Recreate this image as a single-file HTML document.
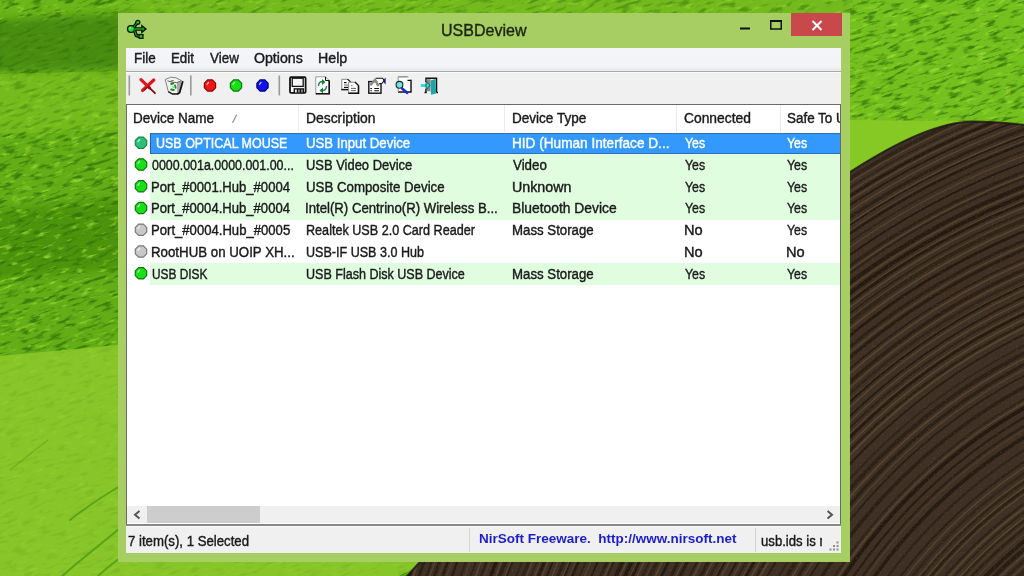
<!DOCTYPE html>
<html><head><meta charset="utf-8"><style>
*{margin:0;padding:0;box-sizing:border-box}
html,body{width:1024px;height:576px;overflow:hidden}
body{position:relative;font-family:"Liberation Sans",sans-serif;background:#5fa815}
svg{position:absolute;left:0;top:0}
.b{position:absolute}
.t{position:absolute;white-space:pre;font-size:14px;line-height:22px;height:22px;color:#1a1a1a;transform-origin:0 0;-webkit-text-stroke:.4px currentColor}
.tw{color:#eef7ff}
</style></head><body>
<svg width="1024" height="576" viewBox="0 0 1024 576">
  <defs>
    <clipPath id="hill"><path d="M200,800 L420,562 C600,370 780,215 850,172 C900,140 940,122 973,121.5 C1000,121.5 1030,125 1100,135 L1100,800 Z"/></clipPath>
    <filter id="gdark" x="-50%" y="-50%" width="200%" height="200%" color-interpolation-filters="sRGB">
      <feTurbulence type="fractalNoise" baseFrequency="0.07 0.3" numOctaves="3" seed="11"/>
      <feColorMatrix type="matrix" values="0 0 0 0 0.20  0 0 0 0 0.45  0 0 0 0 0.03  0 0 0 -4.5 2.2"/>
    </filter>
    <filter id="glight" x="-50%" y="-50%" width="200%" height="200%" color-interpolation-filters="sRGB">
      <feTurbulence type="fractalNoise" baseFrequency="0.08 0.3" numOctaves="3" seed="4"/>
      <feColorMatrix type="matrix" values="0 0 0 0 0.62  0 0 0 0 0.86  0 0 0 0 0.2  0 0 0 4.0 -2.3"/>
    </filter>
    <filter id="soft" x="-20%" y="-20%" width="140%" height="140%"><feGaussianBlur stdDeviation="5"/></filter>
    <filter id="bnoise" x="0" y="0" width="100%" height="100%" color-interpolation-filters="sRGB">
      <feTurbulence type="fractalNoise" baseFrequency="0.5" numOctaves="1" seed="2"/>
      <feColorMatrix type="matrix" values="0 0 0 0 0.40  0 0 0 0 0.31  0 0 0 0 0.21  0 0 0 1.4 -0.8"/>
    </filter>
  </defs>
  <rect x="0" y="0" width="1024" height="576" fill="#6cb41a"/>
  <polygon points="0,0 1024,0 1024,12 0,22" fill="#6cb61a"/>
  <polygon points="850,0 1024,0 1024,122 850,120" fill="#74c01e"/>
  <g filter="url(#soft)"><polygon points="-20,135 140,130 140,350 -20,360" fill="#64ad16"/>
  <polygon points="-20,212 140,196 140,268 -20,282" fill="#4e9410"/></g>
  <g transform="rotate(-18 512 288)"><rect x="-300" y="-300" width="1600" height="1200" filter="url(#gdark)" opacity=".8"/></g>
  <g transform="rotate(-18 512 288)"><rect x="-300" y="-300" width="1600" height="1200" filter="url(#glight)" opacity=".8"/></g>
  <g filter="url(#soft)" opacity=".7"><polygon points="-20,21 140,12 140,70 -20,72" fill="#3a7c0c"/></g>
  <polygon points="0,74 118,71 118,130 0,133" fill="#80c422" opacity=".45"/>
  <rect x="118" y="0" width="732" height="14" fill="#82c624" opacity=".35"/>
  <polygon points="0,356 118,345 430,560 398,576 0,576" fill="#8ecb2c" opacity=".8"/>
  <g stroke="#3e8a10" stroke-opacity=".6" fill="none" stroke-linecap="round">
    <path d="M60,578 C80,560 100,545 120,528" stroke-width="2.2"/>
    <path d="M70,520 C85,508 100,498 120,486" stroke-width="1.8"/>
    <path d="M96,578 C104,570 112,564 120,558" stroke-width="2"/>
    <path d="M10,470 C25,458 35,450 48,440" stroke-width="1.2" stroke-opacity=".35"/>
  </g>
  <polygon points="850,120 975,121 850,172" fill="#86c824"/>
  <path d="M200,800 L420,562 C600,370 780,215 850,172 C900,140 940,122 973,121.5 C1000,121.5 1030,125 1100,135 L1100,800 Z" fill="#3e3024"/>
  <g clip-path="url(#hill)"><circle cx="1291" cy="875" r="250.0" fill="none" stroke="#1f160d" stroke-width="2.38" stroke-opacity="0.43"/><circle cx="1291" cy="875" r="256.4" fill="none" stroke="#1f160d" stroke-width="2.89" stroke-opacity="0.53"/><circle cx="1291" cy="875" r="252.3" fill="none" stroke="#75603f" stroke-width="0.84" stroke-opacity="0.45"/><circle cx="1291" cy="875" r="264.5" fill="none" stroke="#1f160d" stroke-width="1.77" stroke-opacity="0.40"/><circle cx="1291" cy="875" r="259.9" fill="none" stroke="#75603f" stroke-width="0.92" stroke-opacity="0.45"/><circle cx="1291" cy="875" r="271.6" fill="none" stroke="#1f160d" stroke-width="3.11" stroke-opacity="0.82"/><circle cx="1291" cy="875" r="267.9" fill="none" stroke="#75603f" stroke-width="1.78" stroke-opacity="0.45"/><circle cx="1291" cy="875" r="277.9" fill="none" stroke="#1f160d" stroke-width="3.66" stroke-opacity="0.49"/><circle cx="1291" cy="875" r="274.6" fill="none" stroke="#75603f" stroke-width="1.11" stroke-opacity="0.45"/><circle cx="1291" cy="875" r="288.0" fill="none" stroke="#1f160d" stroke-width="2.03" stroke-opacity="0.64"/><circle cx="1291" cy="875" r="284.2" fill="none" stroke="#75603f" stroke-width="1.35" stroke-opacity="0.45"/><circle cx="1291" cy="875" r="294.3" fill="none" stroke="#1f160d" stroke-width="1.74" stroke-opacity="0.45"/><circle cx="1291" cy="875" r="302.4" fill="none" stroke="#1f160d" stroke-width="2.35" stroke-opacity="0.64"/><circle cx="1291" cy="875" r="298.8" fill="none" stroke="#75603f" stroke-width="1.59" stroke-opacity="0.45"/><circle cx="1291" cy="875" r="311.9" fill="none" stroke="#1f160d" stroke-width="2.19" stroke-opacity="0.64"/><circle cx="1291" cy="875" r="307.2" fill="none" stroke="#75603f" stroke-width="1.53" stroke-opacity="0.45"/><circle cx="1291" cy="875" r="319.3" fill="none" stroke="#1f160d" stroke-width="3.95" stroke-opacity="0.41"/><circle cx="1291" cy="875" r="314.8" fill="none" stroke="#75603f" stroke-width="0.95" stroke-opacity="0.45"/><circle cx="1291" cy="875" r="327.8" fill="none" stroke="#1f160d" stroke-width="1.69" stroke-opacity="0.68"/><circle cx="1291" cy="875" r="336.7" fill="none" stroke="#1f160d" stroke-width="3.70" stroke-opacity="0.51"/><circle cx="1291" cy="875" r="345.6" fill="none" stroke="#1f160d" stroke-width="2.99" stroke-opacity="0.58"/><circle cx="1291" cy="875" r="356.4" fill="none" stroke="#1f160d" stroke-width="2.74" stroke-opacity="0.68"/><circle cx="1291" cy="875" r="351.9" fill="none" stroke="#75603f" stroke-width="1.45" stroke-opacity="0.45"/><circle cx="1291" cy="875" r="367.3" fill="none" stroke="#1f160d" stroke-width="3.57" stroke-opacity="0.49"/><circle cx="1291" cy="875" r="363.0" fill="none" stroke="#75603f" stroke-width="0.82" stroke-opacity="0.45"/><circle cx="1291" cy="875" r="375.6" fill="none" stroke="#1f160d" stroke-width="2.00" stroke-opacity="0.41"/><circle cx="1291" cy="875" r="371.1" fill="none" stroke="#75603f" stroke-width="0.93" stroke-opacity="0.45"/><circle cx="1291" cy="875" r="382.9" fill="none" stroke="#1f160d" stroke-width="2.54" stroke-opacity="0.79"/><circle cx="1291" cy="875" r="379.0" fill="none" stroke="#75603f" stroke-width="1.35" stroke-opacity="0.45"/><circle cx="1291" cy="875" r="393.3" fill="none" stroke="#1f160d" stroke-width="3.57" stroke-opacity="0.78"/><circle cx="1291" cy="875" r="389.5" fill="none" stroke="#75603f" stroke-width="1.16" stroke-opacity="0.45"/><circle cx="1291" cy="875" r="403.7" fill="none" stroke="#1f160d" stroke-width="3.90" stroke-opacity="0.43"/><circle cx="1291" cy="875" r="400.2" fill="none" stroke="#75603f" stroke-width="1.03" stroke-opacity="0.45"/><circle cx="1291" cy="875" r="412.1" fill="none" stroke="#1f160d" stroke-width="3.01" stroke-opacity="0.48"/><circle cx="1291" cy="875" r="408.3" fill="none" stroke="#75603f" stroke-width="1.17" stroke-opacity="0.45"/><circle cx="1291" cy="875" r="421.0" fill="none" stroke="#1f160d" stroke-width="3.89" stroke-opacity="0.70"/><circle cx="1291" cy="875" r="416.7" fill="none" stroke="#75603f" stroke-width="1.48" stroke-opacity="0.45"/><circle cx="1291" cy="875" r="427.2" fill="none" stroke="#1f160d" stroke-width="3.76" stroke-opacity="0.74"/><circle cx="1291" cy="875" r="437.2" fill="none" stroke="#1f160d" stroke-width="2.54" stroke-opacity="0.55"/><circle cx="1291" cy="875" r="432.9" fill="none" stroke="#75603f" stroke-width="0.86" stroke-opacity="0.45"/><circle cx="1291" cy="875" r="443.6" fill="none" stroke="#1f160d" stroke-width="2.10" stroke-opacity="0.43"/><circle cx="1291" cy="875" r="440.4" fill="none" stroke="#75603f" stroke-width="0.80" stroke-opacity="0.45"/><circle cx="1291" cy="875" r="450.3" fill="none" stroke="#1f160d" stroke-width="1.84" stroke-opacity="0.53"/><circle cx="1291" cy="875" r="445.6" fill="none" stroke="#75603f" stroke-width="1.41" stroke-opacity="0.45"/><circle cx="1291" cy="875" r="457.1" fill="none" stroke="#1f160d" stroke-width="2.21" stroke-opacity="0.52"/><circle cx="1291" cy="875" r="453.8" fill="none" stroke="#75603f" stroke-width="1.65" stroke-opacity="0.45"/><circle cx="1291" cy="875" r="468.0" fill="none" stroke="#1f160d" stroke-width="2.72" stroke-opacity="0.59"/><circle cx="1291" cy="875" r="464.8" fill="none" stroke="#75603f" stroke-width="1.14" stroke-opacity="0.45"/><circle cx="1291" cy="875" r="475.3" fill="none" stroke="#1f160d" stroke-width="3.59" stroke-opacity="0.43"/><circle cx="1291" cy="875" r="470.4" fill="none" stroke="#75603f" stroke-width="1.33" stroke-opacity="0.45"/><circle cx="1291" cy="875" r="482.1" fill="none" stroke="#1f160d" stroke-width="2.90" stroke-opacity="0.36"/><circle cx="1291" cy="875" r="477.1" fill="none" stroke="#75603f" stroke-width="1.66" stroke-opacity="0.45"/><circle cx="1291" cy="875" r="491.6" fill="none" stroke="#1f160d" stroke-width="2.23" stroke-opacity="0.53"/><circle cx="1291" cy="875" r="487.0" fill="none" stroke="#75603f" stroke-width="1.33" stroke-opacity="0.45"/><circle cx="1291" cy="875" r="501.5" fill="none" stroke="#1f160d" stroke-width="2.39" stroke-opacity="0.46"/><circle cx="1291" cy="875" r="512.4" fill="none" stroke="#1f160d" stroke-width="3.65" stroke-opacity="0.75"/><circle cx="1291" cy="875" r="522.1" fill="none" stroke="#1f160d" stroke-width="2.14" stroke-opacity="0.61"/><circle cx="1291" cy="875" r="519.0" fill="none" stroke="#75603f" stroke-width="0.83" stroke-opacity="0.45"/><circle cx="1291" cy="875" r="529.5" fill="none" stroke="#1f160d" stroke-width="2.22" stroke-opacity="0.70"/><circle cx="1291" cy="875" r="537.7" fill="none" stroke="#1f160d" stroke-width="3.85" stroke-opacity="0.84"/><circle cx="1291" cy="875" r="545.5" fill="none" stroke="#1f160d" stroke-width="2.13" stroke-opacity="0.46"/><circle cx="1291" cy="875" r="542.1" fill="none" stroke="#75603f" stroke-width="1.42" stroke-opacity="0.45"/><circle cx="1291" cy="875" r="556.0" fill="none" stroke="#1f160d" stroke-width="3.62" stroke-opacity="0.59"/><circle cx="1291" cy="875" r="566.0" fill="none" stroke="#1f160d" stroke-width="1.80" stroke-opacity="0.68"/><circle cx="1291" cy="875" r="575.9" fill="none" stroke="#1f160d" stroke-width="3.40" stroke-opacity="0.59"/><circle cx="1291" cy="875" r="571.4" fill="none" stroke="#75603f" stroke-width="1.13" stroke-opacity="0.45"/><circle cx="1291" cy="875" r="585.9" fill="none" stroke="#1f160d" stroke-width="3.93" stroke-opacity="0.55"/><circle cx="1291" cy="875" r="581.1" fill="none" stroke="#75603f" stroke-width="1.52" stroke-opacity="0.45"/><circle cx="1291" cy="875" r="592.8" fill="none" stroke="#1f160d" stroke-width="1.90" stroke-opacity="0.43"/><circle cx="1291" cy="875" r="602.8" fill="none" stroke="#1f160d" stroke-width="1.95" stroke-opacity="0.76"/><circle cx="1291" cy="875" r="612.1" fill="none" stroke="#1f160d" stroke-width="2.44" stroke-opacity="0.62"/><circle cx="1291" cy="875" r="609.1" fill="none" stroke="#75603f" stroke-width="1.77" stroke-opacity="0.45"/><circle cx="1291" cy="875" r="621.4" fill="none" stroke="#1f160d" stroke-width="2.86" stroke-opacity="0.82"/><circle cx="1291" cy="875" r="616.6" fill="none" stroke="#75603f" stroke-width="1.63" stroke-opacity="0.45"/><circle cx="1291" cy="875" r="628.4" fill="none" stroke="#1f160d" stroke-width="2.20" stroke-opacity="0.50"/><circle cx="1291" cy="875" r="624.2" fill="none" stroke="#75603f" stroke-width="1.06" stroke-opacity="0.45"/><circle cx="1291" cy="875" r="636.5" fill="none" stroke="#1f160d" stroke-width="1.91" stroke-opacity="0.81"/><circle cx="1291" cy="875" r="632.6" fill="none" stroke="#75603f" stroke-width="1.38" stroke-opacity="0.45"/><circle cx="1291" cy="875" r="647.0" fill="none" stroke="#1f160d" stroke-width="2.61" stroke-opacity="0.81"/><circle cx="1291" cy="875" r="643.0" fill="none" stroke="#75603f" stroke-width="1.32" stroke-opacity="0.45"/><circle cx="1291" cy="875" r="653.1" fill="none" stroke="#1f160d" stroke-width="2.66" stroke-opacity="0.44"/><circle cx="1291" cy="875" r="648.5" fill="none" stroke="#75603f" stroke-width="0.97" stroke-opacity="0.45"/><circle cx="1291" cy="875" r="661.5" fill="none" stroke="#1f160d" stroke-width="3.34" stroke-opacity="0.63"/><circle cx="1291" cy="875" r="657.5" fill="none" stroke="#75603f" stroke-width="1.36" stroke-opacity="0.45"/><circle cx="1291" cy="875" r="671.4" fill="none" stroke="#1f160d" stroke-width="1.85" stroke-opacity="0.63"/><circle cx="1291" cy="875" r="667.9" fill="none" stroke="#75603f" stroke-width="1.57" stroke-opacity="0.45"/><circle cx="1291" cy="875" r="680.0" fill="none" stroke="#1f160d" stroke-width="2.95" stroke-opacity="0.73"/><circle cx="1291" cy="875" r="688.2" fill="none" stroke="#1f160d" stroke-width="3.07" stroke-opacity="0.60"/><circle cx="1291" cy="875" r="683.8" fill="none" stroke="#75603f" stroke-width="1.25" stroke-opacity="0.45"/><circle cx="1291" cy="875" r="696.8" fill="none" stroke="#1f160d" stroke-width="2.75" stroke-opacity="0.82"/><circle cx="1291" cy="875" r="707.2" fill="none" stroke="#1f160d" stroke-width="3.86" stroke-opacity="0.48"/><circle cx="1291" cy="875" r="702.3" fill="none" stroke="#75603f" stroke-width="1.64" stroke-opacity="0.45"/><circle cx="1291" cy="875" r="713.9" fill="none" stroke="#1f160d" stroke-width="1.89" stroke-opacity="0.57"/><circle cx="1291" cy="875" r="710.4" fill="none" stroke="#75603f" stroke-width="0.87" stroke-opacity="0.45"/><circle cx="1291" cy="875" r="723.3" fill="none" stroke="#1f160d" stroke-width="3.48" stroke-opacity="0.80"/><circle cx="1291" cy="875" r="718.8" fill="none" stroke="#75603f" stroke-width="1.46" stroke-opacity="0.45"/><circle cx="1291" cy="875" r="730.0" fill="none" stroke="#1f160d" stroke-width="3.72" stroke-opacity="0.83"/><circle cx="1291" cy="875" r="725.1" fill="none" stroke="#75603f" stroke-width="1.20" stroke-opacity="0.45"/><circle cx="1291" cy="875" r="738.4" fill="none" stroke="#1f160d" stroke-width="3.98" stroke-opacity="0.77"/><circle cx="1291" cy="875" r="734.5" fill="none" stroke="#75603f" stroke-width="1.32" stroke-opacity="0.45"/><circle cx="1291" cy="875" r="746.1" fill="none" stroke="#1f160d" stroke-width="2.07" stroke-opacity="0.51"/><circle cx="1291" cy="875" r="752.2" fill="none" stroke="#1f160d" stroke-width="2.93" stroke-opacity="0.57"/><circle cx="1291" cy="875" r="748.5" fill="none" stroke="#75603f" stroke-width="1.42" stroke-opacity="0.45"/><circle cx="1291" cy="875" r="760.8" fill="none" stroke="#1f160d" stroke-width="1.75" stroke-opacity="0.84"/><circle cx="1291" cy="875" r="771.6" fill="none" stroke="#1f160d" stroke-width="1.85" stroke-opacity="0.48"/><circle cx="1291" cy="875" r="767.1" fill="none" stroke="#75603f" stroke-width="1.07" stroke-opacity="0.45"/><circle cx="1291" cy="875" r="778.3" fill="none" stroke="#1f160d" stroke-width="2.61" stroke-opacity="0.81"/><circle cx="1291" cy="875" r="785.6" fill="none" stroke="#1f160d" stroke-width="1.96" stroke-opacity="0.81"/><circle cx="1291" cy="875" r="781.2" fill="none" stroke="#75603f" stroke-width="0.89" stroke-opacity="0.45"/><circle cx="1291" cy="875" r="791.8" fill="none" stroke="#1f160d" stroke-width="3.25" stroke-opacity="0.56"/><circle cx="1291" cy="875" r="787.0" fill="none" stroke="#75603f" stroke-width="1.43" stroke-opacity="0.45"/><circle cx="1291" cy="875" r="801.9" fill="none" stroke="#1f160d" stroke-width="1.80" stroke-opacity="0.78"/><circle cx="1291" cy="875" r="797.1" fill="none" stroke="#75603f" stroke-width="1.25" stroke-opacity="0.45"/><circle cx="1291" cy="875" r="809.6" fill="none" stroke="#1f160d" stroke-width="2.93" stroke-opacity="0.81"/><circle cx="1291" cy="875" r="806.3" fill="none" stroke="#75603f" stroke-width="1.33" stroke-opacity="0.45"/><circle cx="1291" cy="875" r="816.7" fill="none" stroke="#1f160d" stroke-width="1.86" stroke-opacity="0.43"/><circle cx="1291" cy="875" r="813.3" fill="none" stroke="#75603f" stroke-width="1.11" stroke-opacity="0.45"/><circle cx="1291" cy="875" r="824.3" fill="none" stroke="#1f160d" stroke-width="3.42" stroke-opacity="0.49"/><circle cx="1291" cy="875" r="820.9" fill="none" stroke="#75603f" stroke-width="1.15" stroke-opacity="0.45"/><circle cx="1291" cy="875" r="830.4" fill="none" stroke="#1f160d" stroke-width="2.20" stroke-opacity="0.36"/><circle cx="1291" cy="875" r="839.1" fill="none" stroke="#1f160d" stroke-width="2.05" stroke-opacity="0.59"/><circle cx="1291" cy="875" r="845.6" fill="none" stroke="#1f160d" stroke-width="3.57" stroke-opacity="0.57"/><circle cx="1291" cy="875" r="841.0" fill="none" stroke="#75603f" stroke-width="1.19" stroke-opacity="0.45"/><circle cx="1291" cy="875" r="854.2" fill="none" stroke="#1f160d" stroke-width="3.25" stroke-opacity="0.84"/><circle cx="1291" cy="875" r="849.5" fill="none" stroke="#75603f" stroke-width="1.51" stroke-opacity="0.45"/><circle cx="1291" cy="875" r="863.4" fill="none" stroke="#1f160d" stroke-width="2.57" stroke-opacity="0.52"/><circle cx="1291" cy="875" r="860.1" fill="none" stroke="#75603f" stroke-width="0.87" stroke-opacity="0.45"/><circle cx="1291" cy="875" r="873.1" fill="none" stroke="#1f160d" stroke-width="2.21" stroke-opacity="0.43"/><circle cx="1291" cy="875" r="868.4" fill="none" stroke="#75603f" stroke-width="1.67" stroke-opacity="0.45"/><circle cx="1291" cy="875" r="882.4" fill="none" stroke="#1f160d" stroke-width="2.28" stroke-opacity="0.47"/><circle cx="1291" cy="875" r="878.5" fill="none" stroke="#75603f" stroke-width="0.96" stroke-opacity="0.45"/><circle cx="1291" cy="875" r="890.6" fill="none" stroke="#1f160d" stroke-width="2.23" stroke-opacity="0.83"/><circle cx="1291" cy="875" r="899.4" fill="none" stroke="#1f160d" stroke-width="2.19" stroke-opacity="0.83"/><circle cx="1291" cy="875" r="895.7" fill="none" stroke="#75603f" stroke-width="0.80" stroke-opacity="0.45"/><circle cx="1291" cy="875" r="907.3" fill="none" stroke="#1f160d" stroke-width="2.74" stroke-opacity="0.60"/><circle cx="1291" cy="875" r="903.3" fill="none" stroke="#75603f" stroke-width="0.80" stroke-opacity="0.45"/><circle cx="1291" cy="875" r="914.6" fill="none" stroke="#1f160d" stroke-width="1.82" stroke-opacity="0.55"/><circle cx="1291" cy="875" r="911.6" fill="none" stroke="#75603f" stroke-width="1.10" stroke-opacity="0.45"/><circle cx="1291" cy="875" r="921.8" fill="none" stroke="#1f160d" stroke-width="3.01" stroke-opacity="0.61"/><circle cx="1291" cy="875" r="931.1" fill="none" stroke="#1f160d" stroke-width="3.32" stroke-opacity="0.79"/><circle cx="1291" cy="875" r="927.4" fill="none" stroke="#75603f" stroke-width="1.78" stroke-opacity="0.45"/><circle cx="1291" cy="875" r="937.8" fill="none" stroke="#1f160d" stroke-width="3.34" stroke-opacity="0.67"/><circle cx="1291" cy="875" r="933.1" fill="none" stroke="#75603f" stroke-width="1.69" stroke-opacity="0.45"/><circle cx="1291" cy="875" r="946.9" fill="none" stroke="#1f160d" stroke-width="3.36" stroke-opacity="0.76"/><circle cx="1291" cy="875" r="942.9" fill="none" stroke="#75603f" stroke-width="1.30" stroke-opacity="0.45"/><circle cx="1291" cy="875" r="957.1" fill="none" stroke="#1f160d" stroke-width="3.53" stroke-opacity="0.76"/><circle cx="1291" cy="875" r="952.3" fill="none" stroke="#75603f" stroke-width="1.48" stroke-opacity="0.45"/><rect x="380" y="100" width="700" height="500" filter="url(#bnoise)"/></g>
  <path d="M200,800 L420,562 C600,370 780,215 850,172 C900,140 940,122 973,121.5 C1000,121.5 1030,125 1100,135" fill="none" stroke="#1e1810" stroke-width="2" stroke-opacity=".8"/>
</svg>
<div class="b" style="left:118px;top:13px;width:732px;height:549px;background:#a6ce62"></div>
<div class="b" style="left:791px;top:13px;width:51px;height:23px;background:#c9484c"></div>
<div class="b" style="left:126px;top:48px;width:715px;height:505px;background:#f0f0f0"></div>
<div class="b" style="left:126px;top:48px;width:715px;height:23px;background:linear-gradient(#f4f5f8 0,#f3f4f7 80%,#e6e6e8 100%)"></div>
<div class="b" style="left:126px;top:71px;width:715px;height:1px;background:#a9a9a9"></div>
<div class="b" style="left:126px;top:72px;width:715px;height:1px;background:#fcfcfc"></div>
<div class="b" style="left:126px;top:104px;width:715px;height:421px;background:#fff;border:1px solid #6a6a6a;border-bottom:none"></div>
<div class="b" style="left:126px;top:524px;width:715px;height:2px;background:#888"></div>
<div class="b" style="left:126px;top:526px;width:715px;height:1px;background:#fbfbfb"></div>
<div class="b" style="left:298px;top:105px;width:1px;height:27px;background:#ececec"></div>
<div class="b" style="left:504px;top:105px;width:1px;height:27px;background:#ececec"></div>
<div class="b" style="left:676px;top:105px;width:1px;height:27px;background:#ececec"></div>
<div class="b" style="left:780px;top:105px;width:1px;height:27px;background:#ececec"></div>
<div class="b" style="left:150px;top:133px;width:690px;height:20.75px;background:#3399ff;border-top:1px solid #2f6fb8;border-bottom:1px solid #2f6fb8;border-left:1px solid #2a5f9a"></div>
<div class="b" style="left:150px;top:154px;width:690px;height:22px;background:#e0fde0"></div>
<div class="b" style="left:150px;top:176px;width:690px;height:22px;background:#e0fde0"></div>
<div class="b" style="left:150px;top:198px;width:690px;height:22px;background:#e0fde0"></div>
<div class="b" style="left:150px;top:263px;width:690px;height:22px;background:#e0fde0"></div>
<div class="b" style="left:127px;top:506px;width:713px;height:18px;background:#f0f0f0;border-bottom:1px solid #fff"></div>
<div class="b" style="left:147px;top:506px;width:113px;height:17px;background:#cdcdcd"></div>
<div class="b" style="left:126px;top:527px;width:715px;height:26px;background:#f0f0f0"></div>
<div class="b" style="left:469px;top:528px;width:1px;height:24px;background:#d5d5d5"></div>
<div class="b" style="left:755px;top:528px;width:1px;height:24px;background:#d5d5d5"></div>
<div class="t" style="left:440.77px;top:20.00px;font-size:17px;font-weight:400;color:#1e2612;transform:scaleX(0.9430)">USBDeview</div>
<div class="t" style="left:133.69px;top:47.00px;font-size:14px;font-weight:400;color:#1a1a1a;transform:scaleX(0.9615)">File</div>
<div class="t" style="left:170.71px;top:47.00px;font-size:14px;font-weight:400;color:#1a1a1a;transform:scaleX(0.9498)">Edit</div>
<div class="t" style="left:209.65px;top:47.00px;font-size:14px;font-weight:400;color:#1a1a1a;transform:scaleX(0.9583)">View</div>
<div class="t" style="left:254.04px;top:47.00px;font-size:14px;font-weight:400;color:#1a1a1a;transform:scaleX(1.0106)">Options</div>
<div class="t" style="left:317.88px;top:47.00px;font-size:14px;font-weight:400;color:#1a1a1a;transform:scaleX(1.0148)">Help</div>
<div class="t" style="left:133.44px;top:107.30px;font-size:14px;font-weight:400;color:#1a1a1a;transform:scaleX(0.9648)">Device Name</div>
<div class="t" style="left:305.71px;top:107.30px;font-size:14px;font-weight:400;color:#1a1a1a;transform:scaleX(0.9912)">Description</div>
<div class="t" style="left:512.04px;top:107.30px;font-size:14px;font-weight:400;color:#1a1a1a;transform:scaleX(0.9667)">Device Type</div>
<div class="t" style="left:684.01px;top:107.30px;font-size:14px;font-weight:400;color:#1a1a1a;transform:scaleX(0.9879)">Connected</div>
<div class="b" style="left:0;top:0;width:840px;height:576px;overflow:hidden"><div class="t" style="left:786.93px;top:107.30px;font-size:14px;font-weight:400;color:#1a1a1a;transform:scaleX(0.9586)">Safe To U</div></div>
<div class="t" style="left:127.94px;top:530.30px;font-size:14px;font-weight:400;color:#1a1a1a;transform:scaleX(0.9424)">7 item(s), 1 Selected</div>
<div class="t" style="left:478.60px;top:528.20px;font-size:12px;font-weight:700;color:#1c1cd0;transform:scaleX(1.1246);-webkit-text-stroke:0">NirSoft Freeware.  http://www.nirsoft.net</div>
<div class="b" style="left:0;top:0;width:822px;height:576px;overflow:hidden"><div class="t" style="left:761.06px;top:530.00px;font-size:14px;font-weight:400;color:#1a1a1a;transform:scaleX(0.9385)">usb.ids is r</div></div>
<div class="t" style="left:155.72px;top:132.00px;font-size:14px;font-weight:400;color:#ffffff;transform:scaleX(0.8922)">USB OPTICAL MOUSE</div>
<div class="t" style="left:305.56px;top:132.00px;font-size:14px;font-weight:400;color:#ffffff;transform:scaleX(0.9421)">USB Input Device</div>
<div class="t" style="left:511.73px;top:132.00px;font-size:14px;font-weight:400;color:#ffffff;transform:scaleX(0.9730)">HID (Human Interface D...</div>
<div class="t" style="left:684.74px;top:132.00px;font-size:14px;font-weight:400;color:#ffffff;transform:scaleX(0.8773)">Yes</div>
<div class="t" style="left:787.34px;top:132.00px;font-size:14px;font-weight:400;color:#ffffff;transform:scaleX(0.8773)">Yes</div>
<div class="t" style="left:152.06px;top:153.75px;font-size:14px;font-weight:400;color:#1a1a1a;transform:scaleX(0.8891)">0000.001a.0000.001.00...</div>
<div class="t" style="left:305.58px;top:153.75px;font-size:14px;font-weight:400;color:#1a1a1a;transform:scaleX(0.9240)">USB Video Device</div>
<div class="t" style="left:512.70px;top:153.75px;font-size:14px;font-weight:400;color:#1a1a1a;transform:scaleX(0.9513)">Video</div>
<div class="t" style="left:684.74px;top:153.75px;font-size:14px;font-weight:400;color:#1a1a1a;transform:scaleX(0.8773)">Yes</div>
<div class="t" style="left:787.34px;top:153.75px;font-size:14px;font-weight:400;color:#1a1a1a;transform:scaleX(0.8773)">Yes</div>
<div class="t" style="left:151.47px;top:175.50px;font-size:14px;font-weight:400;color:#1a1a1a;transform:scaleX(0.9348)">Port_#0001.Hub_#0004</div>
<div class="t" style="left:305.56px;top:175.50px;font-size:14px;font-weight:400;color:#1a1a1a;transform:scaleX(0.9474)">USB Composite Device</div>
<div class="t" style="left:511.68px;top:175.50px;font-size:14px;font-weight:400;color:#1a1a1a;transform:scaleX(1.0177)">Unknown</div>
<div class="t" style="left:684.74px;top:175.50px;font-size:14px;font-weight:400;color:#1a1a1a;transform:scaleX(0.8773)">Yes</div>
<div class="t" style="left:787.34px;top:175.50px;font-size:14px;font-weight:400;color:#1a1a1a;transform:scaleX(0.8773)">Yes</div>
<div class="t" style="left:151.47px;top:197.25px;font-size:14px;font-weight:400;color:#1a1a1a;transform:scaleX(0.9348)">Port_#0004.Hub_#0004</div>
<div class="t" style="left:305.38px;top:197.25px;font-size:14px;font-weight:400;color:#1a1a1a;transform:scaleX(0.9421)">Intel(R) Centrino(R) Wireless B...</div>
<div class="t" style="left:511.71px;top:197.25px;font-size:14px;font-weight:400;color:#1a1a1a;transform:scaleX(0.9885)">Bluetooth Device</div>
<div class="t" style="left:684.74px;top:197.25px;font-size:14px;font-weight:400;color:#1a1a1a;transform:scaleX(0.8773)">Yes</div>
<div class="t" style="left:787.34px;top:197.25px;font-size:14px;font-weight:400;color:#1a1a1a;transform:scaleX(0.8773)">Yes</div>
<div class="t" style="left:151.47px;top:219.00px;font-size:14px;font-weight:400;color:#1a1a1a;transform:scaleX(0.9361)">Port_#0004.Hub_#0005</div>
<div class="t" style="left:305.61px;top:219.00px;font-size:14px;font-weight:400;color:#1a1a1a;transform:scaleX(0.9006)">Realtek USB 2.0 Card Reader</div>
<div class="t" style="left:511.76px;top:219.00px;font-size:14px;font-weight:400;color:#1a1a1a;transform:scaleX(0.9456)">Mass Storage</div>
<div class="t" style="left:683.85px;top:219.00px;font-size:14px;font-weight:400;color:#1a1a1a;transform:scaleX(1.0432)">No</div>
<div class="t" style="left:787.34px;top:219.00px;font-size:14px;font-weight:400;color:#1a1a1a;transform:scaleX(0.8773)">Yes</div>
<div class="t" style="left:151.46px;top:240.75px;font-size:14px;font-weight:400;color:#1a1a1a;transform:scaleX(0.9484)">RootHUB on UOIP XH...</div>
<div class="t" style="left:305.61px;top:240.75px;font-size:14px;font-weight:400;color:#1a1a1a;transform:scaleX(0.8968)">USB-IF USB 3.0 Hub</div>
<div class="t" style="left:683.85px;top:240.75px;font-size:14px;font-weight:400;color:#1a1a1a;transform:scaleX(1.0432)">No</div>
<div class="t" style="left:786.45px;top:240.75px;font-size:14px;font-weight:400;color:#1a1a1a;transform:scaleX(1.0432)">No</div>
<div class="t" style="left:152.37px;top:262.50px;font-size:14px;font-weight:400;color:#1a1a1a;transform:scaleX(0.8487)">USB DISK</div>
<div class="t" style="left:305.62px;top:262.50px;font-size:14px;font-weight:400;color:#1a1a1a;transform:scaleX(0.8953)">USB Flash Disk USB Device</div>
<div class="t" style="left:511.76px;top:262.50px;font-size:14px;font-weight:400;color:#1a1a1a;transform:scaleX(0.9456)">Mass Storage</div>
<div class="t" style="left:684.74px;top:262.50px;font-size:14px;font-weight:400;color:#1a1a1a;transform:scaleX(0.8773)">Yes</div>
<div class="t" style="left:787.34px;top:262.50px;font-size:14px;font-weight:400;color:#1a1a1a;transform:scaleX(0.8773)">Yes</div>
<svg width="1024" height="576" viewBox="0 0 1024 576"><g stroke-linejoin="round">
 <path d="M133,29 H143 M133.5,27.5 L137.5,22.5 M134.5,30.5 L136.3,35.5 L140,36.5" stroke="#061006" stroke-width="3.6" fill="none" stroke-linecap="round"/>
 <circle cx="131" cy="29" r="4.1" fill="#061006"/>
 <circle cx="137.8" cy="22.3" r="2.6" fill="#061006"/>
 <rect x="138.6" y="33.9" width="5" height="5" fill="#061006"/>
 <polygon points="141.2,24.2 147,29 141.2,33.8" fill="#061006"/>
 <path d="M133,29 H143" stroke="#1a8a1a" stroke-width="1.8" fill="none"/>
 <path d="M133.5,27.5 L137.5,22.5 M134.5,30.5 L136.3,35.5 L140,36.5" stroke="#1a8a1a" stroke-width="1.2" fill="none"/>
 <polygon points="142.5,26.8 144.8,29 142.5,31.2" fill="#1a9a1a"/>
 <circle cx="131" cy="29" r="2.8" fill="#2ed83a"/>
 <circle cx="130.2" cy="28" r="1" fill="#8af08a"/>
 <circle cx="137.8" cy="22.3" r="1.3" fill="#2ec83a"/>
 <rect x="139.9" y="35.2" width="2.4" height="2.4" fill="#2ec83a"/>
</g>
<rect x="740" y="27.5" width="10" height="2" fill="#111"/>
<rect x="770.75" y="21" width="10.5" height="8" fill="none" stroke="#111" stroke-width="1.5"/><rect x="770" y="20" width="12" height="2" fill="#111"/>
<path d="M812.5,21 L821.5,30 M821.5,21 L812.5,30" stroke="#fff" stroke-width="2"/>
<rect x="128.5" y="75.5" width="1.6" height="20" fill="#9a9a9a"/>
<rect x="190.0" y="75.5" width="1.6" height="20" fill="#9a9a9a"/>
<rect x="278.5" y="75.5" width="1.6" height="20" fill="#9a9a9a"/>
<path d="M141,79.6 L149.5,87.8" stroke="#e3121c" stroke-width="3.2" stroke-linecap="round"/><path d="M149,87.3 L155,93.2" stroke="#7a0c0c" stroke-width="1.8" stroke-linecap="round"/><path d="M153.8,80 L142.6,90.4" stroke="#e3121c" stroke-width="3.2" stroke-linecap="round"/><path d="M143.5,90.8 L149,85.5" stroke="#a00c10" stroke-width="1.2"/>
<path d="M165.2,79.5 L170.8,77.2 L176,77.8 L181.2,80.5 L182.8,81.3 L179.8,92.5 L177.5,94 L172.5,94 L168.3,91.5 Z" fill="#f2f2f2" stroke="#777" stroke-width="0.9"/>
<path d="M176.8,82.6 L182.8,81.3 L179.8,92.5 L177.3,93.8 Z" fill="#a8a8a8"/>
<path d="M182.8,81.3 L179.6,92.6 L177.2,94.2" stroke="#111" stroke-width="1.7" fill="none"/>
<path d="M168.3,91.6 L172.5,94.1 L177.5,94" stroke="#222" stroke-width="1.5" fill="none"/>
<path d="M167.5,80.8 L172,82.2 L176.8,82.6 L181,81" stroke="#555" stroke-width="0.9" fill="none"/>
<path d="M170.5,81.2 L173.5,80.5" stroke="#444" stroke-width="0.9"/>
<path d="M171.2,84 L173.2,83.4 M175,85.5 L175.6,87.8 M173.8,90 L171.2,89.5" stroke="#1a8a2a" stroke-width="1.9" stroke-linecap="round"/>
<circle cx="173.2" cy="86.8" r="1.4" fill="#9ee89e"/>
<polygon points="207.68,79.90 212.32,79.90 215.60,83.18 215.60,87.82 212.32,91.10 207.68,91.10 204.40,87.82 204.40,83.18" fill="#f01414" stroke="#8a0000" stroke-width="1.2"/><path d="M207,84.3 L208.5,82.5" stroke="#fff" stroke-opacity=".75" stroke-width="1.3" stroke-linecap="round"/>
<polygon points="233.68,79.90 238.32,79.90 241.60,83.18 241.60,87.82 238.32,91.10 233.68,91.10 230.40,87.82 230.40,83.18" fill="#14e014" stroke="#007a00" stroke-width="1.2"/><path d="M233,84.3 L234.5,82.5" stroke="#fff" stroke-opacity=".75" stroke-width="1.3" stroke-linecap="round"/>
<polygon points="260.18,79.90 264.82,79.90 268.10,83.18 268.10,87.82 264.82,91.10 260.18,91.10 256.90,87.82 256.90,83.18" fill="#1010f0" stroke="#00007a" stroke-width="1.2"/><path d="M259.5,84.3 L261.0,82.5" stroke="#fff" stroke-opacity=".75" stroke-width="1.3" stroke-linecap="round"/>
<rect x="290" y="77.2" width="15.6" height="15.6" rx="1" fill="#fff" stroke="#111" stroke-width="1.8"/>
<rect x="292.2" y="78.2" width="11" height="8.2" fill="#f6f6f6" stroke="#111" stroke-width="1.3"/>
<rect x="293.6" y="88.2" width="10.4" height="5" fill="#111"/>
<rect x="295" y="89.5" width="1.8" height="3" fill="#eee"/><rect x="298" y="89.5" width="1.8" height="3" fill="#888"/><rect x="301" y="89.5" width="1.8" height="3" fill="#888"/>
<path d="M315.8,76.8 L325.5,76.8 L329.2,80.5 L329.2,93.8 L315.8,93.8 Z" fill="#fff" stroke="#999" stroke-width="1"/>
<path d="M329.2,80.5 L329.2,93.8 L315.8,93.8" fill="none" stroke="#111" stroke-width="1.6"/>
<path d="M325.5,76.8 L325.5,80.5 L329.2,80.5" fill="none" stroke="#111" stroke-width="1"/>
<path d="M318.5,86 C318.5,83 320.5,81.5 323,81.5" fill="none" stroke="#2a7a8a" stroke-width="1.5"/>
<polygon points="322,79 325.5,82 322,85" fill="#0a8a1a"/>
<path d="M326.5,86 C326.5,89 324.5,90.5 322,90.5" fill="none" stroke="#2a7a8a" stroke-width="1.5"/>
<polygon points="323,87.5 319.5,90.5 323,93.5" fill="#0a8a1a"/>
<path d="M341.8,79.3 H347.8 L350.5,82 V89.5 H341.8 Z" fill="#fff" stroke="#8a8a8a" stroke-width="1"/>
<path d="M341.3,89.6 H349" stroke="#111" stroke-width="1.5"/>
<path d="M347.6,79.1 L350.7,82.2" stroke="#111" stroke-width="1.2"/>
<path d="M344,82.6 H346.5" stroke="#111" stroke-width="1.2"/>
<path d="M344,85 H349" stroke="#777" stroke-width="1.1"/>
<path d="M344,87.4 H349" stroke="#111" stroke-width="1.2"/>
<path d="M348.6,82.2 H355.2 L358.5,85.5 V93.2 H348.6 Z" fill="#fff" stroke="#8a8a8a" stroke-width="1"/>
<path d="M358.5,85.5 V93.3 H348.3" fill="none" stroke="#111" stroke-width="1.6"/>
<path d="M355,82 L358.7,85.7" stroke="#111" stroke-width="1.3"/>
<path d="M351,85.8 H352.5 M351,88.4 H356 M351,90.6 H356" stroke="#666" stroke-width="1"/>
<rect x="368.8" y="81.6" width="12.2" height="11.6" fill="#fff" stroke="#111" stroke-width="1.4"/>
<path d="M370.3,88.5 H372 M374.3,88.5 H379 M370.3,90.8 H372 M374.3,90.8 H379" stroke="#111" stroke-width="1.1"/>
<path d="M370.3,85.2 L375.2,79.6 L378.3,86.2" stroke="#8a8a8a" stroke-width="2.4" fill="none"/>
<path d="M376,78.2 H382.5 L384.3,80.5 L382,83.3 L378.5,84" fill="#fff" stroke="#111" stroke-width="1.1"/>
<polygon points="385.6,77.5 385.6,84.6 382.8,81" fill="#16168a"/>
<path d="M398.2,76.8 L407.5,76.8 L411,80.3 L411,92" fill="#fff" stroke="#999" stroke-width="1.2"/>
<rect x="398.5" y="77.5" width="12" height="14.2" fill="#fff"/>
<path d="M398.2,76.8 H407.5" stroke="#999" stroke-width="1.4"/>
<path d="M407.5,80.3 H411 V92 H398" fill="none" stroke="#111" stroke-width="1.3"/>
<path d="M398.2,76.8 V92" stroke="#999" stroke-width="1"/>
<path d="M401.5,88 L408,93.5" stroke="#1a2ad0" stroke-width="2.6"/>
<circle cx="399.5" cy="84.8" r="3.4" fill="#6ee6e6" stroke="#222" stroke-width="1.1"/>
<path d="M426,82 V78.2 H436.5 V92.5" fill="none" stroke="#111" stroke-width="1.5"/>
<path d="M426,89 V92.5 H424.5 M436.5,92.5 H438" fill="none" stroke="#111" stroke-width="1.5"/>
<path d="M430.5,80.5 L435.5,79 L436,93.5 L431,94.8 Z" fill="#1ca6a6"/>
<rect x="426.5" y="79.2" width="4" height="12" fill="#888"/>
<path d="M420.8,85.5 H427" stroke="#22dede" stroke-width="2.8"/>
<polygon points="426,81.5 430.2,85.5 426,89.5" fill="#22dede" stroke="#111" stroke-width=".6"/>
<polygon points="138.64,137.05 143.36,137.05 146.70,140.39 146.70,145.11 143.36,148.45 138.64,148.45 135.30,145.11 135.30,140.39" fill="#2ec07a" stroke="#148a4a" stroke-width="1.2"/><path d="M138,141.55 L139.5,139.75" stroke="#fff" stroke-opacity=".75" stroke-width="1.3" stroke-linecap="round"/>
<polygon points="138.64,158.80 143.36,158.80 146.70,162.14 146.70,166.86 143.36,170.20 138.64,170.20 135.30,166.86 135.30,162.14" fill="#18e018" stroke="#0a7a0a" stroke-width="1.2"/><path d="M138,163.3 L139.5,161.5" stroke="#fff" stroke-opacity=".75" stroke-width="1.3" stroke-linecap="round"/>
<polygon points="138.64,180.55 143.36,180.55 146.70,183.89 146.70,188.61 143.36,191.95 138.64,191.95 135.30,188.61 135.30,183.89" fill="#18e018" stroke="#0a7a0a" stroke-width="1.2"/><path d="M138,185.05 L139.5,183.25" stroke="#fff" stroke-opacity=".75" stroke-width="1.3" stroke-linecap="round"/>
<polygon points="138.64,202.30 143.36,202.30 146.70,205.64 146.70,210.36 143.36,213.70 138.64,213.70 135.30,210.36 135.30,205.64" fill="#18e018" stroke="#0a7a0a" stroke-width="1.2"/><path d="M138,206.8 L139.5,205.0" stroke="#fff" stroke-opacity=".75" stroke-width="1.3" stroke-linecap="round"/>
<polygon points="138.64,224.05 143.36,224.05 146.70,227.39 146.70,232.11 143.36,235.45 138.64,235.45 135.30,232.11 135.30,227.39" fill="#c8c8c8" stroke="#7a7a7a" stroke-width="1.2"/><path d="M138,228.55 L139.5,226.75" stroke="#fff" stroke-opacity=".75" stroke-width="1.3" stroke-linecap="round"/>
<polygon points="138.64,245.80 143.36,245.80 146.70,249.14 146.70,253.86 143.36,257.20 138.64,257.20 135.30,253.86 135.30,249.14" fill="#c8c8c8" stroke="#7a7a7a" stroke-width="1.2"/><path d="M138,250.3 L139.5,248.5" stroke="#fff" stroke-opacity=".75" stroke-width="1.3" stroke-linecap="round"/>
<polygon points="138.64,267.55 143.36,267.55 146.70,270.89 146.70,275.61 143.36,278.95 138.64,278.95 135.30,275.61 135.30,270.89" fill="#18e018" stroke="#0a7a0a" stroke-width="1.2"/><path d="M138,272.05 L139.5,270.25" stroke="#fff" stroke-opacity=".75" stroke-width="1.3" stroke-linecap="round"/>
<path d="M236.5,115 L232.8,122.3" stroke="#9a9a9a" stroke-width="1.4" stroke-linecap="round"/>
<path d="M139.5,511 L135,514.75 L139.5,518.5" fill="none" stroke="#555" stroke-width="2"/>
<path d="M827.5,511 L832,514.75 L827.5,518.5" fill="none" stroke="#555" stroke-width="2"/>
<rect x="836.5" y="541.5" width="2" height="2" fill="#8e8e8e"/>
<rect x="833" y="545" width="2" height="2" fill="#8e8e8e"/>
<rect x="836.5" y="545" width="2" height="2" fill="#8e8e8e"/>
<rect x="829.5" y="548.5" width="2" height="2" fill="#8e8e8e"/>
<rect x="833" y="548.5" width="2" height="2" fill="#8e8e8e"/>
<rect x="836.5" y="548.5" width="2" height="2" fill="#8e8e8e"/></svg>
</body></html>
